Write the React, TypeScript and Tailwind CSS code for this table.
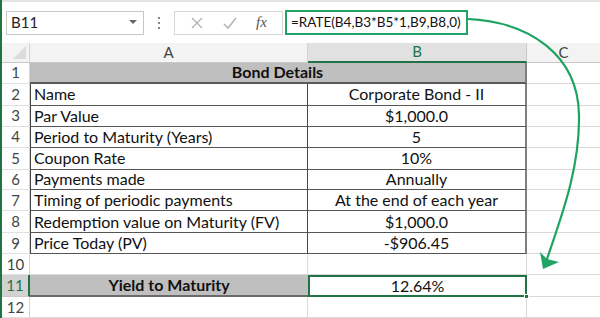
import React from 'react';

const font = { fontFamily: 'Lato, "Liberation Sans", sans-serif' };

const rowHeights = [21, 22, 21, 21, 22, 21, 21, 22, 21, 21, 22, 21];

type Row = { n: number; a?: string; b?: string };

const rows: Row[] = [
  { n: 1 },
  { n: 2, a: 'Name', b: 'Corporate Bond - II' },
  { n: 3, a: 'Par Value', b: '$1,000.0' },
  { n: 4, a: 'Period to Maturity (Years)', b: '5' },
  { n: 5, a: 'Coupon Rate', b: '10%' },
  { n: 6, a: 'Payments made', b: 'Annually' },
  { n: 7, a: 'Timing of periodic payments', b: 'At the end of each year' },
  { n: 8, a: 'Redemption value on Maturity (FV)', b: '$1,000.0' },
  { n: 9, a: 'Price Today (PV)', b: '-$906.45' },
  { n: 10 },
  { n: 11 },
  { n: 12 },
];

function RowHeader({ n, selected }: { n: number; selected?: boolean }) {
  return (
    <div
      className={
        selected
          ? 'w-[28px] shrink-0 flex items-center justify-center text-[15px] bg-[#d2d2d2] text-[#217346] border-r-2 border-r-[#217346] border-b border-b-[#c8c8c8]'
          : 'w-[28px] shrink-0 flex items-center justify-center text-[15px] text-[#444] border-r border-r-[#d4d4d4] border-b border-b-[#e1e1e1]'
      }
    >
      {n}
    </div>
  );
}

function SheetRow({ row, h }: { row: Row; h: number }) {
  const { n } = row;
  let a: React.ReactNode = null;
  let b: React.ReactNode = null;
  let merged: React.ReactNode = null;

  if (n === 1) {
    merged = (
      <div className="w-[497px] flex items-center justify-center bg-[#bfbfbf] font-bold border-b-2 border-b-[#5a5a5a] border-r-2 border-r-[#7f7f7f]">
        Bond Details
      </div>
    );
  } else if (n >= 2 && n <= 9) {
    a = (
      <div className="w-[278px] flex items-center pl-[3px] border-l border-l-[#444] border-b border-b-[#555] border-r border-r-[#444]">
        {row.a}
      </div>
    );
    b = (
      <div className="w-[219px] flex items-center justify-center border-b border-b-[#555] border-r-2 border-r-[#7f7f7f]">
        {row.b}
      </div>
    );
  } else if (n === 11) {
    a = (
      <div className="w-[278px] flex items-center justify-center font-bold bg-[#bfbfbf] border-b-2 border-b-[#6a6a6a]">
        Yield to Maturity
      </div>
    );
    b = (
      <div className="relative w-[219px] flex items-center justify-center border-2 border-[#217346]">
        12.64%
        <span className="absolute right-[-4px] bottom-[-4px] w-[5px] h-[5px] bg-[#217346] border border-white" />
      </div>
    );
  } else {
    a = <div className="w-[278px] border-r border-r-[#d9d9d9] border-b border-b-[#d9d9d9]" />;
    b = <div className="w-[219px] border-r border-r-[#d9d9d9] border-b border-b-[#d9d9d9]" />;
  }

  return (
    <div className="flex" style={{ height: h }}>
      <RowHeader n={n} selected={n === 11} />
      {merged ?? (
        <>
          {a}
          {b}
        </>
      )}
      <div className="flex-1 border-b border-b-[#d9d9d9]" />
    </div>
  );
}

export default function App() {
  return (
    <div className="relative w-[600px] h-[318px] overflow-hidden bg-white text-[16px] leading-none text-[#111] flex" style={font}>
      <div className="w-[2px] shrink-0 bg-[#217346]" />
      <div className="flex-1 flex flex-col">
        {/* formula bar */}
        <div className="h-[43px] flex items-center border-t-2 border-t-[#e4e4e4] pt-[1px]">
          <div className="ml-[4px] w-[138px] h-[24px] border border-[#c6c6c6] flex items-center justify-between pl-[4px] pr-[6px]">
            <span className="text-[15px] text-[#222]">B11</span>
            <svg width="8" height="5" viewBox="0 0 8 5">
              <path d="M0 0 L8 0 L4 4 Z" fill="#666" />
            </svg>
          </div>
          <div className="w-[30px] flex flex-col items-center gap-[3px]">
            <span className="w-[2px] h-[2px] bg-[#888]" />
            <span className="w-[2px] h-[2px] bg-[#888]" />
            <span className="w-[2px] h-[2px] bg-[#888]" />
          </div>
          <div className="w-[109px] h-[24px] border border-[#d6d6d6] flex items-center justify-around px-[6px]">
            <svg width="14" height="14" viewBox="0 0 14 14">
              <path d="M2 2 L12 12 M12 2 L2 12" stroke="#b4b4b4" strokeWidth="1.4" />
            </svg>
            <svg width="16" height="14" viewBox="0 0 16 14">
              <path d="M2 8 L6 12 L14 2" stroke="#b4b4b4" strokeWidth="1.6" fill="none" />
            </svg>
            <span className="italic text-[#555] text-[15px]" style={{ fontFamily: '"Liberation Serif", serif' }}>
              fx
            </span>
          </div>
          <div className="ml-[2px] w-[183px] h-[25px] border-2 border-[#21a366] flex items-center pl-[4px] text-[13.5px] text-[#111]">
            =RATE(B4,B3*B5*1,B9,B8,0)
          </div>
        </div>

        {/* column headers */}
        <div className="flex h-[20px] text-[15px]">
          <div className="w-[28px] shrink-0 relative bg-[#f3f3f3] border-r border-r-[#d4d4d4] border-b border-b-[#c8c8c8]">
            <svg className="absolute right-[3px] bottom-[3px]" width="13" height="13" viewBox="0 0 13 13">
              <path d="M13 0 L13 13 L0 13 Z" fill="#dcdcdc" />
            </svg>
          </div>
          <div className="w-[278px] flex items-center justify-center bg-[#f3f3f3] text-[#444] border-r border-r-[#d4d4d4] border-b border-b-[#c8c8c8]">
            A
          </div>
          <div className="w-[219px] flex items-center justify-center bg-[#e1e1e1] text-[#217346] border-r border-r-[#c8c8c8] border-b-2 border-b-[#217346]">
            B
          </div>
          <div className="flex-1 flex items-center justify-center bg-[#f3f3f3] text-[#444] border-b border-b-[#c8c8c8]">
            C
          </div>
        </div>

        {rows.map((r, i) => (
          <SheetRow key={r.n} row={r} h={rowHeights[i]} />
        ))}
      </div>

      <svg className="absolute left-0 top-0 pointer-events-none" width="600" height="318" viewBox="0 0 600 318">
        <path
          d="M468 19 C530 22 578 55 579 115 C580 170 560 220 546 262"
          stroke="#1fa463"
          strokeWidth="2.2"
          fill="none"
        />
        <path d="M543 269 L540 252 L547 259 L559 262 Z" fill="#1fa463" />
      </svg>
    </div>
  );
}
